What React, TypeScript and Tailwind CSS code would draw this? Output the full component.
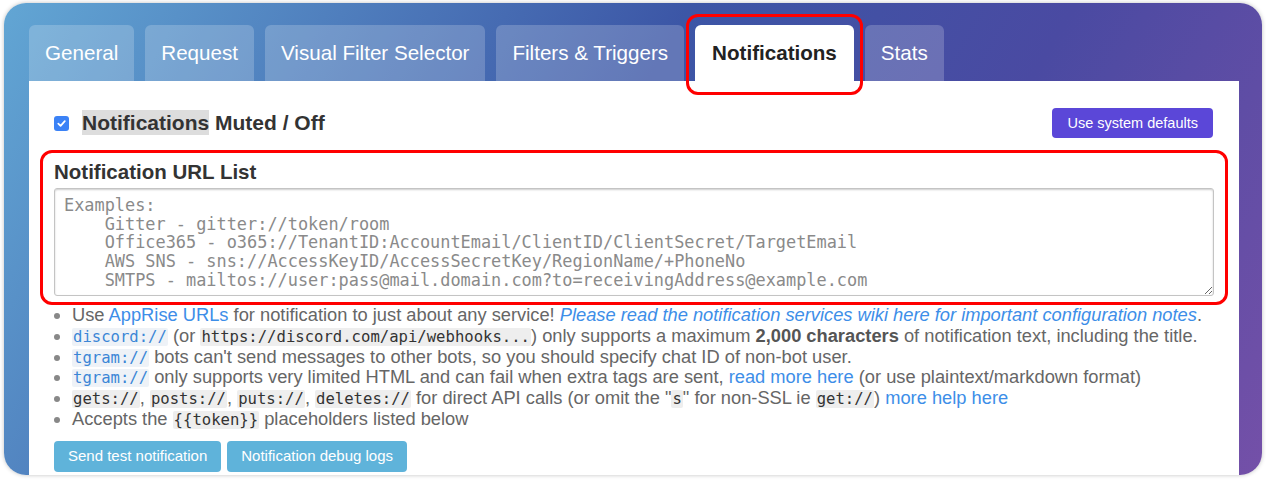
const sans = { fontFamily: '"Liberation Sans", Arial, sans-serif' };

const tabs = ["General", "Request", "Visual Filter Selector", "Filters & Triggers", "Notifications", "Stats"];

const examples = `Examples:
    Gitter - gitter://token/room
    Office365 - o365://TenantID:AccountEmail/ClientID/ClientSecret/TargetEmail
    AWS SNS - sns://AccessKeyID/AccessSecretKey/RegionName/+PhoneNo
    SMTPS - mailtos://user:pass@mail.domain.com?to=receivingAddress@example.com`;

function Code({ children, blue }: { children: React.ReactNode; blue?: boolean }) {
  return (
    <code
      className={
        "font-['DejaVu_Sans_Mono',monospace] text-[15.6px] leading-[1] px-[1px] rounded-[2px] " +
        (blue ? "bg-[#eef2f7] text-[#3b86d6]" : "bg-[#eeeeee] text-[#333]")
      }
    >
      {children}
    </code>
  );
}

function A({ children, italic }: { children: React.ReactNode; italic?: boolean }) {
  return <a className={"text-[#3d8ee8] " + (italic ? "italic" : "")}>{children}</a>;
}

export default function App() {
  return (
    <div className="w-[1266px] h-[480px] bg-white pt-[3px] pl-[4px]" style={sans}>
      <div className="w-[1258px] h-[472px] rounded-[22px] overflow-hidden shadow-[0_0_4px_rgba(0,0,0,0.25)] bg-[linear-gradient(120deg,#62a6d4_0%,#3c56a6_45%,#4a4aa2_70%,#7450a8_100%)] flex flex-col pt-[22px] pl-[25px] pr-[23px]">
        {/* tabs */}
        <div className="flex gap-[11px] h-[56px] shrink-0">
          {tabs.map((t) =>
            t === "Notifications" ? (
              <div key={t} className="relative bg-white rounded-t-[6px] px-[17px] flex items-center text-[20.6px] font-bold text-[#222]">
                {t}
                <div className="absolute -left-[9px] -right-[9px] -top-[11px] -bottom-[14px] border-[3px] border-[#ff0000] rounded-[12px] z-10" />
              </div>
            ) : (
              <div key={t} className="bg-white/20 rounded-t-[6px] px-[16px] flex items-center text-[20.6px] text-white">
                {t}
              </div>
            )
          )}
        </div>

        {/* panel */}
        <div className="flex-1 bg-white px-[11px] pt-[27px]">
          <div className="flex items-center justify-between pl-[14px] pr-[15px] h-[30px]">
            <div className="flex items-center gap-[13px]">
              <span className="w-[15px] h-[15px] rounded-[3px] bg-[#3b82f6] flex items-center justify-center">
                <svg width="11" height="11" viewBox="0 0 12 12" fill="none">
                  <path d="M2.5 6.2 L5 8.6 L9.6 3.4" stroke="white" strokeWidth="1.9" strokeLinecap="round" strokeLinejoin="round" />
                </svg>
              </span>
              <span className="text-[21px] font-bold text-[#333]">
                <span className="bg-[#dddddd] py-[1px]">Notifications</span> Muted / Off
              </span>
            </div>
            <button className="h-[30px] px-[15px] rounded-[4px] bg-[#5b47d8] text-white text-[14.5px] pt-[1px]">
              Use system defaults
            </button>
          </div>

          <div className="mt-[12px] border-[3px] border-[#ff0000] rounded-[12px] px-[11px] pt-[7px] pb-[6px]">
            <div className="text-[20.5px] leading-[24px] font-bold text-[#333]">Notification URL List</div>
            <textarea
              readOnly
              defaultValue={examples}
              className="mt-[4px] block w-full h-[108px] border border-[#c4c4c4] rounded-[3px] shadow-[inset_0_1px_2px_rgba(0,0,0,0.2)] px-[9px] pt-[7px] text-[16.9px] leading-[18.7px] text-[#8a8a8a] font-['DejaVu_Sans_Mono',monospace] whitespace-pre overflow-hidden outline-none"
            />
          </div>

          <ul className="list-disc pl-[32px] text-[18.3px] leading-[20.8px] text-[#666] marker:text-[#888]">
            <li>
              Use <A>AppRise URLs</A> for notification to just about any service!{" "}
              <A italic>Please read the notification services wiki here for important configuration notes</A>.
            </li>
            <li>
              <Code blue>discord://</Code> (or <Code>https://discord.com/api/webhooks...</Code>) only supports a maximum{" "}
              <b className="text-[#555]">2,000 characters</b> of notification text, including the title.
            </li>
            <li>
              <Code blue>tgram://</Code> bots can't send messages to other bots, so you should specify chat ID of non-bot user.
            </li>
            <li>
              <Code blue>tgram://</Code> only supports very limited HTML and can fail when extra tags are sent,{" "}
              <A>read more here</A> (or use plaintext/markdown format)
            </li>
            <li>
              <Code>gets://</Code>, <Code>posts://</Code>, <Code>puts://</Code>, <Code>deletes://</Code> for direct API calls
              (or omit the "<Code>s</Code>" for non-SSL ie <Code>get://</Code>) <A>more help here</A>
            </li>
            <li>
              Accepts the <Code>{"{{token}}"}</Code> placeholders listed below
            </li>
          </ul>

          <div className="flex gap-[6px] mt-[11px] pl-[14px]">
            <button className="h-[31px] px-[14px] rounded-[4px] bg-[#5fb3da] text-white text-[15px]">Send test notification</button>
            <button className="h-[31px] px-[14px] rounded-[4px] bg-[#5fb3da] text-white text-[15px]">Notification debug logs</button>
          </div>
        </div>
      </div>
    </div>
  );
}
